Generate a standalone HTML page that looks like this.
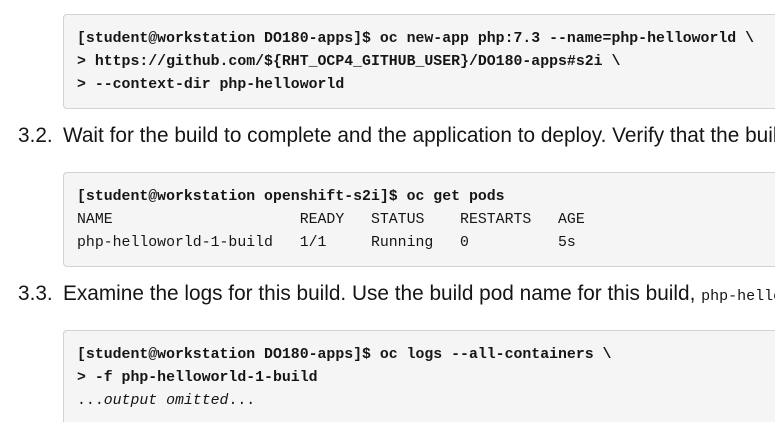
<!DOCTYPE html>
<html><head><style>
html,body{margin:0;width:775px;height:422px;overflow:hidden}
body{background:#fff;font-family:"Liberation Sans",sans-serif;color:#151515;position:relative}
.pre{position:absolute;left:63px;width:712px;background:#f5f5f5;border:1px solid #d2d2d2;border-right:none;border-radius:4px 0 0 4px;box-sizing:border-box;padding:13px 0 0 13px;font-family:"Liberation Mono",monospace;font-size:14.85px;line-height:23px;white-space:pre;overflow:hidden;color:#151515}
b{font-weight:bold}
.h{position:absolute;left:0;width:775px;overflow:hidden;font-size:20.8px;white-space:nowrap;height:28px}
.h span.n{position:absolute;left:18px}
.h span.t{position:absolute;left:63px}
code{font-family:"Liberation Mono",monospace;font-size:15px}
</style></head><body>
<div class="pre" style="top:14px;height:95px"><b>[student@workstation DO180-apps]$ oc new-app php:7.3 --name=php-helloworld \
&gt; https://github.com/${RHT_OCP4_GITHUB_USER}/DO180-apps#s2i \
&gt; --context-dir php-helloworld</b></div>
<div class="h" style="top:124px"><span class="n">3.2.</span><span class="t">Wait for the build to complete and the application to deploy. Verify that the build</span></div>
<div class="pre" style="top:172px;height:95px"><b>[student@workstation openshift-s2i]$ oc get pods</b>
NAME                     READY   STATUS    RESTARTS   AGE
php-helloworld-1-build   1/1     Running   0          5s</div>
<div class="h" style="top:282px"><span class="n">3.3.</span><span class="t">Examine the logs for this build. Use the build pod name for this build, <code>php-helloworld</code></span></div>
<div class="pre" style="top:330px;height:92px;border-bottom:none;border-radius:4px 0 0 0"><b>[student@workstation DO180-apps]$ oc logs --all-containers \
&gt; -f php-helloworld-1-build</b>
...<i>output omitted</i>...</div>
</body></html>
